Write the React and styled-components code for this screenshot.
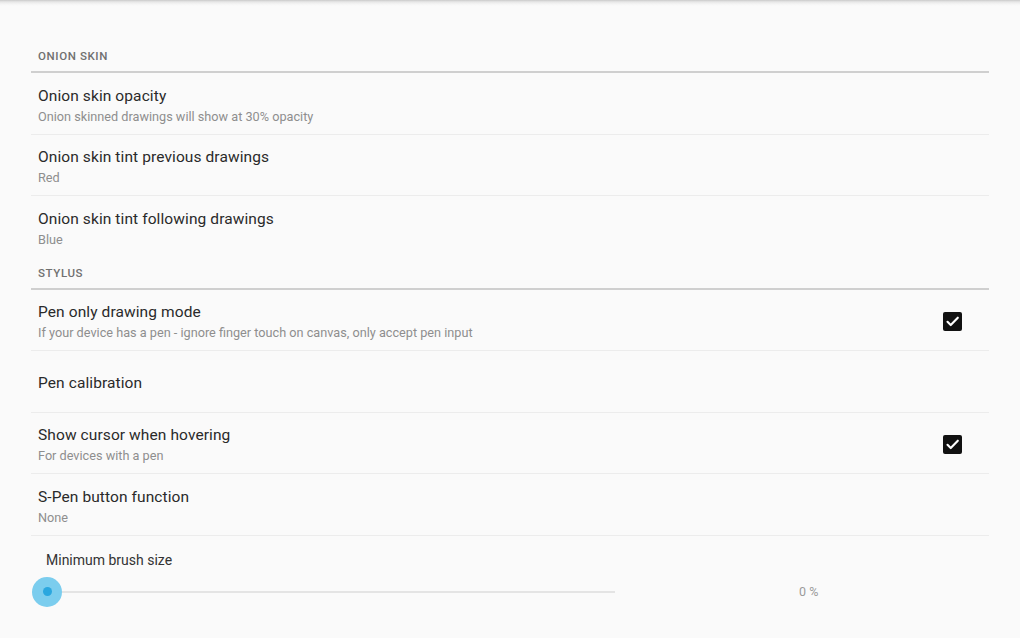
import React from "react";
import styled, { createGlobalStyle } from "styled-components";

const GlobalStyle = createGlobalStyle`
  html, body {
    margin: 0;
    padding: 0;
    background: #fafafa;
    font-family: Roboto, "Noto Sans", "Liberation Sans", sans-serif;
  }
`;

const Page = styled.div`
  width: 1020px;
  height: 638px;
  background: #fafafa;
  overflow: hidden;
`;

const TopShadow = styled.div`
  height: 6px;
  background: linear-gradient(#c9c9c9 0%, #e6e6e6 30%, #f5f5f5 70%, #fafafa 100%);
`;

const List = styled.div`
  margin: 35px 31px 0 31px;
  display: flex;
  flex-direction: column;
`;

const Header = styled.div`
  height: 30px;
  display: flex;
  align-items: center;
  padding-left: 7px;
  font-size: 11.5px;
  font-weight: 500;
  color: #707070;
  letter-spacing: 0.6px;
  border-bottom: 2px solid #cfcfcf;
`;

const Row = styled.div`
  height: 61.5px;
  box-sizing: border-box;
  padding: 4px 27px 0 7px;
  display: flex;
  align-items: center;
  border-bottom: 1px solid ${(p) => (p.$last ? "transparent" : "#ececec")};
`;

const Texts = styled.div`
  flex: 1;
  display: flex;
  flex-direction: column;
  gap: 3px;
`;

const Title = styled.div`
  font-size: 15.5px;
  line-height: 19px;
  letter-spacing: 0.1px;
  color: #2a2a2a;
`;

const Subtitle = styled.div`
  font-size: 12.7px;
  line-height: 15px;
  color: #8e8e8e;
`;

const Checkbox = styled.div`
  width: 19px;
  height: 19px;
  border-radius: 2px;
  background: #111;
  display: flex;
  align-items: center;
  justify-content: center;
`;

const SliderSection = styled.div`
  display: flex;
  flex-direction: column;
`;

const SliderLabel = styled.div`
  padding: 15px 0 0 15px;
  font-size: 14px;
  line-height: 18px;
  color: #333;
`;

const SliderRow = styled.div`
  display: flex;
  align-items: center;
  height: 32px;
  margin-top: 7px;
`;

const Track = styled.div`
  position: relative;
  width: 583px;
  height: 2px;
  margin-left: 1px;
  background: #e4e4e4;
`;

const Thumb = styled.div`
  position: absolute;
  left: 0;
  top: 50%;
  width: 30px;
  height: 30px;
  margin-top: -15px;
  border-radius: 50%;
  background: #7bcdee;
  display: flex;
  align-items: center;
  justify-content: center;
`;

const ThumbDot = styled.div`
  width: 9px;
  height: 9px;
  border-radius: 50%;
  background: #2aa7df;
`;

const Value = styled.div`
  margin-left: 184px;
  font-size: 12.5px;
  color: #9a9a9a;
`;

const Check = () => (
  <Checkbox>
    <svg width="15" height="15" viewBox="0 0 24 24">
      <path d="M4 12.5l5.2 5.2L20.5 6" fill="none" stroke="#fff" strokeWidth="3.4" strokeLinecap="round" strokeLinejoin="round" />
    </svg>
  </Checkbox>
);

const Item = ({ title, subtitle, checked, last }) => (
  <Row $last={last}>
    <Texts>
      <Title>{title}</Title>
      {subtitle && <Subtitle>{subtitle}</Subtitle>}
    </Texts>
    {checked && <Check />}
  </Row>
);

export default function App() {
  return (
    <Page>
      <GlobalStyle />
      <TopShadow />
      <List>
        <Header>ONION SKIN</Header>
        <Item title="Onion skin opacity" subtitle="Onion skinned drawings will show at 30% opacity" />
        <Item title="Onion skin tint previous drawings" subtitle="Red" />
        <Item title="Onion skin tint following drawings" subtitle="Blue" last />
        <Header>STYLUS</Header>
        <Item
          title="Pen only drawing mode"
          subtitle="If your device has a pen - ignore finger touch on canvas, only accept pen input"
          checked
        />
        <Item title="Pen calibration" />
        <Item title="Show cursor when hovering" subtitle="For devices with a pen" checked />
        <Item title="S-Pen button function" subtitle="None" />
        <SliderSection>
          <SliderLabel>Minimum brush size</SliderLabel>
          <SliderRow>
            <Track>
              <Thumb>
                <ThumbDot />
              </Thumb>
            </Track>
            <Value>0 %</Value>
          </SliderRow>
        </SliderSection>
      </List>
    </Page>
  );
}
